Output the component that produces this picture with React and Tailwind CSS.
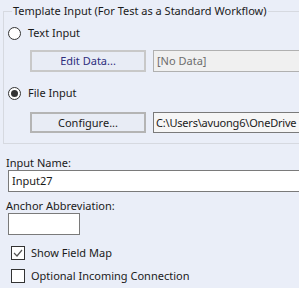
import React from 'react';

const Radio = ({ checked, label }) => (
  <div className="flex items-center h-[16px] pl-[4px] gap-[7px]">
    <span className="w-[13px] h-[13px] rounded-full border border-[#333333] bg-white flex items-center justify-center shrink-0">
      {checked && <span className="w-[7px] h-[7px] rounded-full bg-[#333333]" />}
    </span>
    <span>{label}</span>
  </div>
);

const Check = ({ checked, label }) => (
  <div className="flex items-center h-[14px] pl-[8px] gap-[6px]">
    <span className="w-[14px] h-[14px] border border-[#333333] bg-white flex items-center justify-center shrink-0">
      {checked && (
        <svg width="12" height="12" viewBox="0 0 12 12">
          <polyline points="2,6 5,9 10,3" fill="none" stroke="#555555" strokeWidth="1.2" />
        </svg>
      )}
    </span>
    <span>{label}</span>
  </div>
);

export default function App() {
  return (
    <div className="w-[299px] h-[288px] overflow-hidden bg-[#eaeef8] text-[11px] leading-[14px] text-[#1a1a1a] font-['Noto_Sans',sans-serif] whitespace-nowrap">
      <div className="w-[360px] pl-[3px] pt-[4px]">
        <fieldset className="border border-[#d6d9e0] pb-[10px]">
          <legend className="ml-[8px] px-[1px]">Template Input (For Test as a Standard Workflow)</legend>
          <div className="mt-[7px]">
            <Radio label="Text Input" />
          </div>
          <div className="flex mt-[9px] h-[22px] gap-[7px]">
            <div className="ml-[26px] w-[116px] border-2 border-[#c8c8c8] bg-[#e8ecf5] flex items-center justify-center text-[#2e2e7e]">
              Edit Data...
            </div>
            <div className="flex-1 border border-[#b0b0b0] bg-[#f0f0f0] flex items-center pl-[3px] text-[#6d6d6d]">
              [No Data]
            </div>
          </div>
          <div className="mt-[13px]">
            <Radio checked label="File Input" />
          </div>
          <div className="flex mt-[11px] h-[21px] gap-[7px]">
            <div className="ml-[26px] w-[116px] border-2 border-[#b4b4b4] bg-[#e8ecf5] flex items-center justify-center">
              Configure...
            </div>
            <div className="flex-1 border border-[#7a7a7a] bg-[#f6f6f6] flex items-center pl-[2px] overflow-hidden tracking-[-0.2px]">
              C:\Users\avuong6\OneDrive
            </div>
          </div>
        </fieldset>
        <div className="mt-[12px] ml-[3px]">Input Name:</div>
        <div className="ml-[5px] h-[22px] border border-[#7a7a7a] bg-white flex items-center pl-[3px]">
          Input27
        </div>
        <div className="mt-[7px] ml-[3px]">Anchor Abbreviation:</div>
        <div className="ml-[5px] w-[72px] h-[22px] border border-[#7a7a7a] bg-white" />
        <div className="mt-[11px]">
          <Check checked label="Show Field Map" />
        </div>
        <div className="mt-[9px]">
          <Check label="Optional Incoming Connection" />
        </div>
      </div>
    </div>
  );
}
